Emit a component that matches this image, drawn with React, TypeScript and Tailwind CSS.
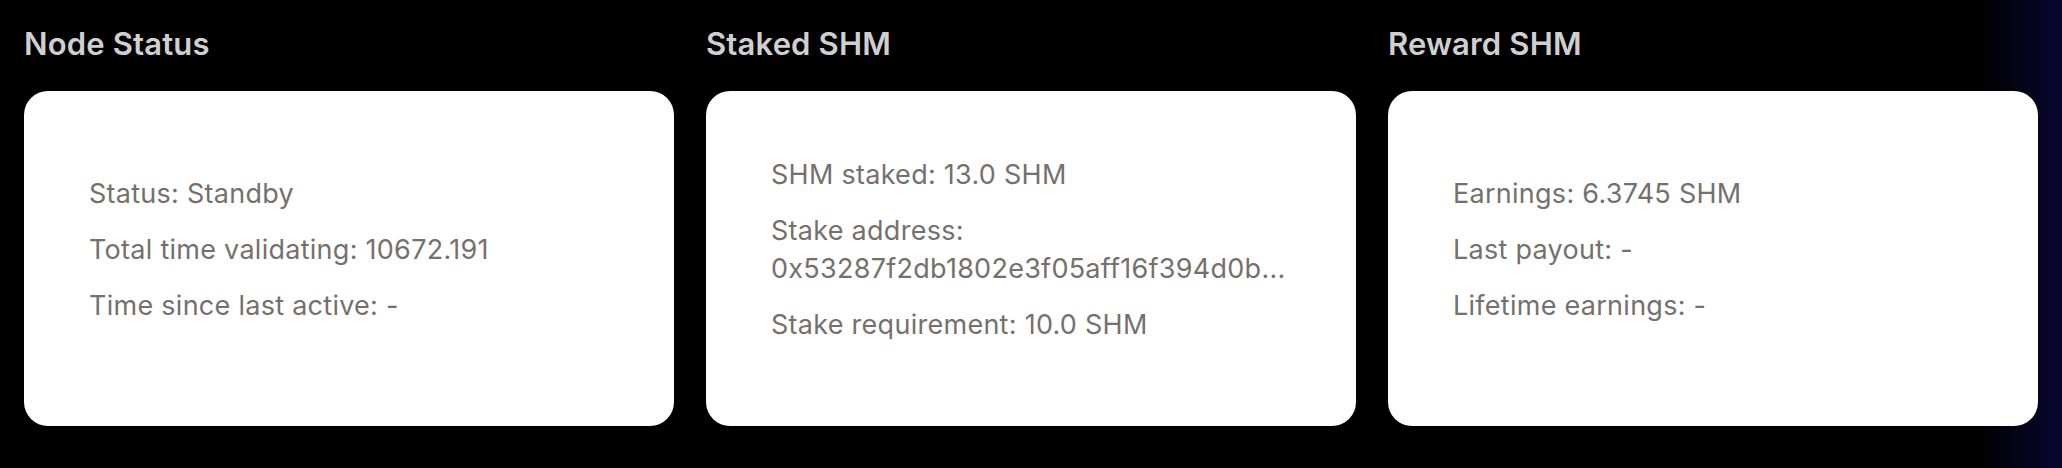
import * as React from "react"

const SECTIONS = [
  {
    title: "Node Status",
    lines: ["Status: Standby", "Total time validating: 10672.191", "Time since last active: -"],
  },
  {
    title: "Staked SHM",
    lines: ["SHM staked: 13.0 SHM", "Stake address: 0x53287f2db1802e3f05aff16f394d0b...", "Stake requirement: 10.0 SHM"],
  },
  {
    title: "Reward SHM",
    lines: ["Earnings: 6.3745 SHM", "Last payout: -", "Lifetime earnings: -"],
  },
]

export default function App() {
  return (
    <div className="min-h-[468px] w-full bg-black bg-[linear-gradient(to_right,#000_96%,#0a0630_100%)] px-6 pt-[28px] font-['Inter',sans-serif]">
      <div className="grid grid-cols-3 gap-8">
        {SECTIONS.map((s) => (
          <section key={s.title}>
            <h2 className="text-[31px] font-semibold leading-none tracking-[0.005em] text-[#cfcfcf]">{s.title}</h2>
            {/* Card */}
            <div className="mt-[32px] flex h-[335px] flex-col justify-center rounded-[24px] bg-white pl-[65px] pr-[48px]">
              {s.lines.map((line) => (
                <p key={line} className="mb-[18px] text-[27px] leading-[38px] tracking-[0.01em] text-[#76706d]">
                  {line}
                </p>
              ))}
            </div>
          </section>
        ))}
      </div>
    </div>
  )
}
